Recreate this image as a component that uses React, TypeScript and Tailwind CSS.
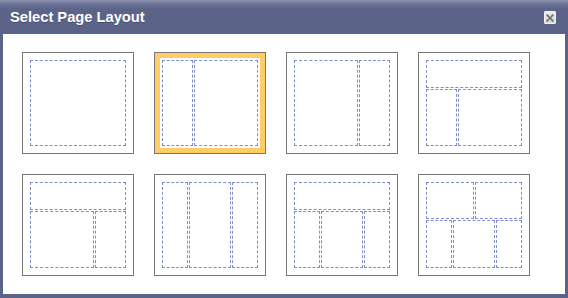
import React from "react";

const D = "border border-dashed border-[#7f8ec4]";

function Cols({ kind }: { kind: "one" | "2a" | "2b" | "3" }) {
  if (kind === "one") return <div className={`${D} flex-1`} />;
  if (kind === "2a")
    return (
      <div className="flex flex-1 gap-px">
        <div className={`${D} w-[31px]`} />
        <div className={`${D} flex-1`} />
      </div>
    );
  if (kind === "2b")
    return (
      <div className="flex flex-1 gap-px">
        <div className={`${D} flex-1`} />
        <div className={`${D} w-[31px]`} />
      </div>
    );
  return (
    <div className="flex flex-1 gap-px">
      <div className={`${D} w-[26px]`} />
      <div className={`${D} flex-1`} />
      <div className={`${D} w-[26px]`} />
    </div>
  );
}

type Layout = {
  header?: "full" | "split" | "tall-split";
  body: "one" | "2a" | "2b" | "3";
  selected?: boolean;
};

const layouts: Layout[] = [
  { body: "one" },
  { body: "2a", selected: true },
  { body: "2b" },
  { header: "full", body: "2a" },
  { header: "full", body: "2b" },
  { body: "3" },
  { header: "full", body: "3" },
  { header: "tall-split", body: "3" },
];

function Tile({ l }: { l: Layout }) {
  const inner = (
    <div className="flex flex-col gap-px w-[96px] h-[86px]">
      {l.header === "full" && <div className={`${D} h-[28px]`} />}
      {l.header === "tall-split" && (
        <div className="flex gap-px h-[37px]">
          <div className={`${D} w-[48px]`} />
          <div className={`${D} flex-1`} />
        </div>
      )}
      <div className="flex flex-1">
        <Cols kind={l.body} />
      </div>
    </div>
  );
  return (
    <div className="w-[112px] h-[102px] border border-[#777777] bg-white">
      {l.selected ? (
        <div className="w-full h-full border-[5px] border-[#ffcc66] p-[2px]">{inner}</div>
      ) : (
        <div className="w-full h-full p-[7px]">{inner}</div>
      )}
    </div>
  );
}

export default function App() {
  return (
    <div
      className="w-[568px] h-[298px] flex flex-col bg-[#5b6389]"
      style={{ fontFamily: '"Liberation Sans", Arial, sans-serif' }}
    >
      <div className="h-[34px] flex items-center justify-between pl-[10px] pr-[12px] bg-[linear-gradient(to_bottom,#8e94b0_0px,#6a7296_4px,#5b6389_9px,#5b6389_100%)]">
        <span className="text-white font-bold text-[14.7px] leading-none mt-[1px] [text-shadow:0_1px_0_rgba(0,0,0,0.25)]">
          Select Page Layout
        </span>
        <div className="w-[12px] h-[13px] mt-[1px] rounded-[1px] border border-[#f2f2f2] bg-[linear-gradient(to_bottom,#ececec,#d4d4d4)] flex items-center justify-center">
          <svg width="8" height="8" viewBox="0 0 8 8">
            <path d="M1.2 1.2 L6.8 6.8 M6.8 1.2 L1.2 6.8" stroke="#777777" strokeWidth="1.8" strokeLinecap="square" />
          </svg>
        </div>
      </div>
      <div className="flex-1 mx-[3px] mb-[4px] bg-white pl-[19px] pt-[18px]">
        <div className="grid grid-cols-[repeat(4,112px)] gap-x-[20px] gap-y-[20px]">
          {layouts.map((l, i) => (
            <Tile key={i} l={l} />
          ))}
        </div>
      </div>
    </div>
  );
}
